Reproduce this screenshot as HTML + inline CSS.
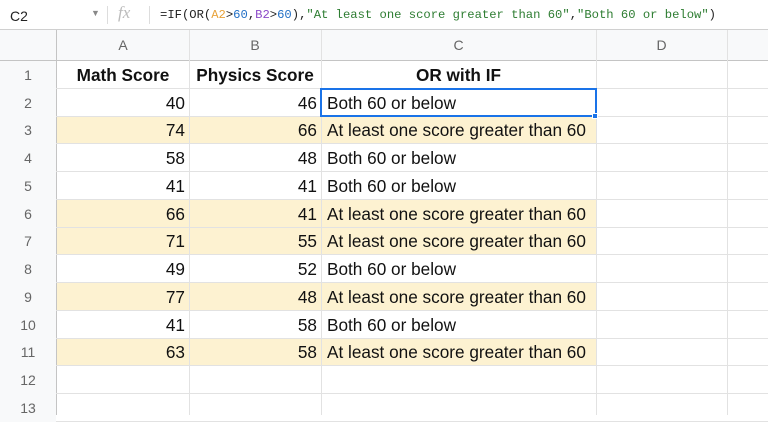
<!DOCTYPE html>
<html><head><style>
*{margin:0;padding:0;box-sizing:border-box}
body{width:768px;height:415px;overflow:hidden;background:#fff;font-family:"Liberation Sans",Arial,sans-serif;position:relative}
.a{position:absolute}
.fb{left:0;top:0;width:768px;height:30px;background:#fff;border-bottom:1px solid #d0d0d0}
.mono{font-family:"Liberation Mono",monospace;font-size:12.2px;color:#222}
.h{background:#f8f9fa;color:#666;font-size:14px;text-align:center;line-height:30px}
.rh{background:#f8f9fa;color:#666;font-size:14px;text-align:center}
.c{font-size:17.2px;color:#111;white-space:nowrap;overflow:hidden}
.vl{width:1px;background:#e2e2e2}
.hl{height:1px;background:#e2e2e2}
</style></head><body>
<div class="a fb"></div>
<div class="a" style="left:10px;top:8px;font-size:14px;color:#222">C2</div>
<div class="a" style="left:91px;top:8px;font-size:9px;color:#888">▼</div>
<div class="a" style="left:107px;top:6px;width:1px;height:18px;background:#ddd"></div>
<div class="a" style="left:118px;top:3px;font-family:'Liberation Serif',serif;font-style:italic;font-size:17px;color:#bbb">fx</div>
<div class="a" style="left:149px;top:6px;width:1px;height:18px;background:#ddd"></div>
<div class="a mono" style="left:160px;top:8px;white-space:pre">=IF(OR(<span style="color:#e8a33b">A2</span>&gt;<span style="color:#1f6ec5">60</span>,<span style="color:#8c4bc9">B2</span>&gt;<span style="color:#1f6ec5">60</span>),<span style="color:#2e7d32">"At least one score greater than 60"</span>,<span style="color:#2e7d32">"Both 60 or below"</span>)</div>
<div class="a h" style="left:0;top:30px;width:768px;height:31px"></div>
<div class="a h" style="left:57px;top:30px;width:132px">A</div>
<div class="a h" style="left:189px;top:30px;width:132px">B</div>
<div class="a h" style="left:321px;top:30px;width:275px">C</div>
<div class="a h" style="left:596px;top:30px;width:131px">D</div>
<div class="a rh" style="left:0;top:61px;width:57px;height:354px"></div>
<div class="a" style="left:0;top:60px;width:768px;height:1px;background:#c4c4c4"></div>
<div class="a" style="left:56px;top:30px;width:1px;height:385px;background:#c4c4c4"></div>
<div class="a" style="left:57px;top:117px;width:539px;height:27px;background:#fdf2d1"></div>
<div class="a" style="left:57px;top:200px;width:539px;height:28px;background:#fdf2d1"></div>
<div class="a" style="left:57px;top:228px;width:539px;height:27px;background:#fdf2d1"></div>
<div class="a" style="left:57px;top:283px;width:539px;height:28px;background:#fdf2d1"></div>
<div class="a" style="left:57px;top:339px;width:539px;height:27px;background:#fdf2d1"></div>
<div class="a vl" style="left:189px;top:30px;height:385px"></div>
<div class="a vl" style="left:321px;top:30px;height:385px"></div>
<div class="a vl" style="left:596px;top:30px;height:385px"></div>
<div class="a vl" style="left:727px;top:30px;height:385px"></div>
<div id="g"></div>
<script>
var tops=[61,89,117,144,172,200,228,255,283,311,339,366,394];
var rows=[["Math Score","Physics Score","OR with IF"],[40,46,0],[74,66,1],[58,48,0],[41,41,0],[66,41,1],[71,55,1],[49,52,0],[77,48,1],[41,58,0],[63,58,1],null,null];
var h='';
for(var i=0;i<13;i++){var t=tops[i],nt=(tops[i+1]||422);
h+='<div class="a hl" style="left:0;top:'+(nt-1)+'px;width:768px"></div>';
h+='<div class="a rh" style="left:0;top:'+t+'px;width:56px;line-height:'+(nt-t)+'px">'+(i+1)+'</div>';
var r=rows[i];if(!r)continue;var lh='line-height:'+(nt-t)+'px;top:'+t+'px;';
if(i==0){h+='<div class="a c" style="'+lh+'left:57px;width:132px;text-align:center;font-weight:bold">'+r[0]+'</div>';
h+='<div class="a c" style="'+lh+'left:189px;width:132px;text-align:center;font-weight:bold">'+r[1]+'</div>';
h+='<div class="a c" style="'+lh+'left:321px;width:275px;text-align:center;font-weight:bold">'+r[2]+'</div>';}
else{h+='<div class="a c" style="'+lh+'left:57px;width:128px;text-align:right">'+r[0]+'</div>';
h+='<div class="a c" style="'+lh+'left:189px;width:128px;text-align:right">'+r[1]+'</div>';
h+='<div class="a c" style="'+lh+'left:327px;width:268px">'+(r[2]?'At least one score greater than 60':'Both 60 or below')+'</div>';}}
document.getElementById('g').innerHTML=h;
</script>
<div class="a" style="left:320px;top:88px;width:277px;height:29px;border:2px solid #1a73e8"></div>
<div class="a" style="left:592px;top:113px;width:6px;height:6px;background:#1a73e8;border:1px solid #fff"></div>
</body></html>
